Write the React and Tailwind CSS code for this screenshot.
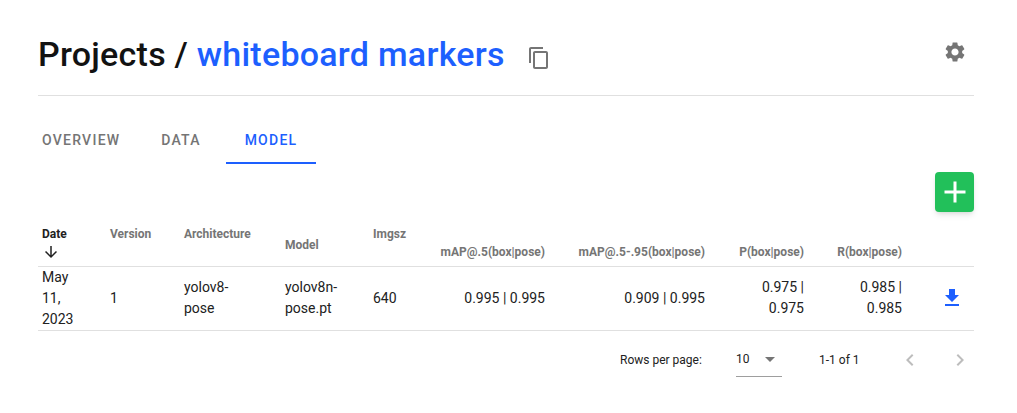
import { MdContentCopy, MdSettings, MdArrowDownward, MdFileDownload, MdArrowDropDown, MdChevronLeft, MdChevronRight, MdAdd } from 'react-icons/md';

function App() {
  return (
    <div className="w-[1017px] h-[413px] overflow-hidden bg-white font-['Roboto',sans-serif] text-[#212121]">
      <div className="ml-[38px] w-[936px] pt-[32px]">
        {/* Title row */}
        <div className="flex items-start justify-between h-[63px] border-b border-[#e0e0e0] box-content pb-0">
          <div className="flex items-center h-[45px]">
            <h1 className="text-[34px] leading-[45px] font-medium tracking-[0.25px] text-[#121212]">
              Projects / <span className="text-[#1d5ffe]">whiteboard markers</span>
            </h1>
            <MdContentCopy className="ml-[22px] mt-[6px] text-[#757575]" size={24} />
          </div>
          <MdSettings className="mt-[8px] mr-[7px] text-[#757575]" size={24} />
        </div>

        {/* Tabs */}
        <div className="flex mt-[20px] h-[48px] text-[14px] font-medium tracking-[1.25px]">
          <div className="w-[98px] pl-[4px] flex items-center text-[#757575]">OVERVIEW</div>
          <div className="w-[90px] flex items-center justify-center text-[#757575]">DATA</div>
          <div className="w-[90px] pt-[2px] flex items-center justify-center text-[#1d5ffe] border-b-2 border-[#1d5ffe]">MODEL</div>
        </div>

        <div className="flex justify-end mt-[8px]">
          <button className="w-[39px] h-[40px] rounded-[4px] bg-[#22c05a] shadow-md flex items-center justify-center text-white">
            <MdAdd size={36} />
          </button>
        </div>

        {/* Table */}
        <table className="w-full table-fixed mt-[13px] border-collapse text-[14px]">
          <colgroup>
            <col className="w-[68px]" />
            <col className="w-[74px]" />
            <col className="w-[101px]" />
            <col className="w-[88px]" />
            <col className="w-[64px]" />
            <col className="w-[116px]" />
            <col className="w-[160px]" />
            <col className="w-[99px]" />
            <col className="w-[98px]" />
            <col className="w-[68px]" />
          </colgroup>
          <thead>
            <tr className="h-[41px] border-b border-[#e0e0e0] text-[12px] leading-[18px] font-bold text-[#757575] text-left">
              <th className="align-top pl-[4px] pr-[24px] font-bold text-[#212121]">
                Date
                <MdArrowDownward className="text-[#212121]" size={18} />
              </th>
              <th className="align-top pl-[4px] font-bold">Version</th>
              <th className="align-top pl-[4px] font-bold">Architecture</th>
              <th className="align-middle pl-[4px] font-bold">Model</th>
              <th className="align-top pl-[4px] font-bold">Imgsz</th>
              <th className="align-bottom pb-[5px] pr-[4px] text-right font-bold">mAP@.5(box|pose)</th>
              <th className="align-bottom pb-[5px] pr-[4px] text-right font-bold">mAP@.5-.95(box|pose)</th>
              <th className="align-bottom pb-[5px] pr-[4px] text-right font-bold">P(box|pose)</th>
              <th className="align-bottom pb-[5px] pr-[4px] text-right font-bold">R(box|pose)</th>
              <th></th>
            </tr>
          </thead>
          <tbody>
            <tr className="h-[64px] border-b border-[#e0e0e0] leading-[21px]">
              <td className="pl-[4px] pr-[24px]">May 11, 2023</td>
              <td className="pl-[4px]">1</td>
              <td className="pl-[4px] pr-[27px]">yolov8-pose</td>
              <td className="pl-[4px]">yolov8n-pose.pt</td>
              <td className="pl-[4px]">640</td>
              <td className="pr-[4px] text-right">0.995 | 0.995</td>
              <td className="pr-[4px] text-right">0.909 | 0.995</td>
              <td className="pl-[24px] pr-[4px] text-right">0.975 | 0.975</td>
              <td className="pl-[24px] pr-[4px] text-right">0.985 | 0.985</td>
              <td>
                <div className="flex justify-end pr-[10px]">
                  <MdFileDownload className="text-[#1d5ffe]" size={24} />
                </div>
              </td>
            </tr>
          </tbody>
        </table>

        {/* Pagination */}
        <div className="flex items-center h-[58px] text-[12px] leading-[18px]">
          <span className="ml-[582px] w-[116px]">Rows per page:</span>
          <div className="w-[46px] h-[33px] self-start mt-[13px] border-b border-[#9e9e9e] flex items-start pt-[6px] justify-between text-[12px]">
            <span>10</span>
            <MdArrowDropDown className="text-[#757575] -mt-[3px]" size={24} />
          </div>
          <span className="ml-[37px]">1-1 of 1</span>
          <MdChevronLeft className="ml-[38px] text-[#bdbdbd]" size={24} />
          <MdChevronRight className="ml-[26px] text-[#bdbdbd]" size={24} />
        </div>
      </div>
    </div>
  );
}

export default App;
